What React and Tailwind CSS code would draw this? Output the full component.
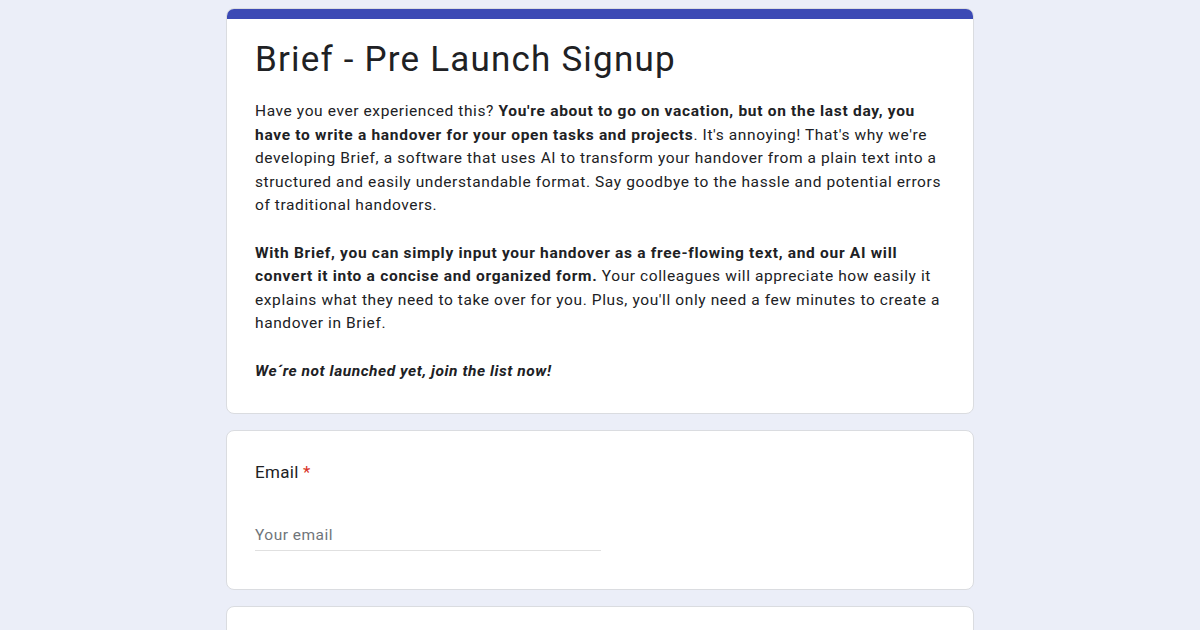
export default function App() {
  return (
    <div className="min-h-[630px] w-full bg-[#ebeef8] flex flex-col items-center pt-2 gap-4 overflow-hidden" style={{ fontFamily: 'Roboto, "Noto Sans", sans-serif', height: 630 }}>
      <div className="w-[748px] bg-white rounded-lg border border-[#dadce0] overflow-hidden shrink-0">
        <div className="h-[11px] bg-[#3c4ab5] -mx-px -mt-px" />
        <div className="px-[28px] pt-[17px] pb-[30px]">
          <h1 className="text-[35px] leading-[48px] text-[#202124] font-normal tracking-[1.2px]">Brief - Pre Launch Signup</h1>
          <div className="mt-[16px] text-[15.5px] leading-[23.6px] text-[#202124] tracking-[0.6px]">
            <p>
              Have you ever experienced this? <b className="font-bold tracking-[0.7px]">You're about to go on vacation, but on the last day, you have to write a handover for your open tasks and projects</b>. It's annoying! That's why we're developing Brief, a software that uses AI to transform your handover from a plain text into a structured and easily understandable format. Say goodbye to the hassle and potential errors of traditional handovers.
            </p>
            <p className="mt-[23.6px]">
              <b className="font-bold tracking-[0.7px]">With Brief, you can simply input your handover as a free-flowing text, and our AI will convert it into a concise and organized form.</b> Your colleagues will appreciate how easily it explains what they need to take over for you. Plus, you'll only need a few minutes to create a handover in Brief.
            </p>
            <p className="mt-[23.6px] font-bold italic tracking-[0.55px]">We´re not launched yet, join the list now!</p>
          </div>
        </div>
      </div>
      <div className="w-[748px] h-[160px] bg-white rounded-lg border border-[#dadce0] shrink-0 px-[28px] pt-[29px]">
        <div className="text-[17px] leading-[24px] text-[#202124] tracking-[0.3px]">
          Email <span className="text-[#d93025]">*</span>
        </div>
        <div className="mt-[39px] w-[346px] border-b border-[#e0e0e0] pb-[3px] text-[15.5px] leading-[24px] text-[#70757a] tracking-[0.5px]">Your email</div>
      </div>
      <div className="w-[748px] h-[100px] bg-white rounded-lg border border-[#dadce0] shrink-0" />
    </div>
  );
}
